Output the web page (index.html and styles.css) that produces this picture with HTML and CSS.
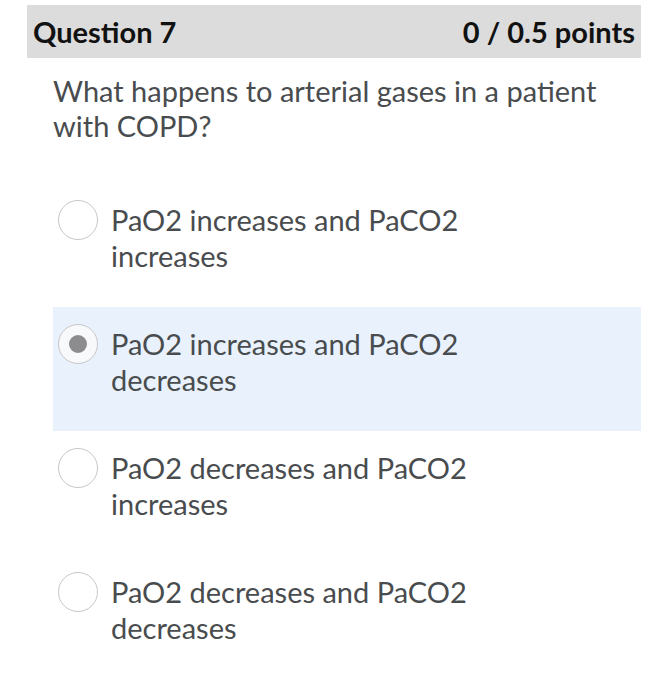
FILE: index.html
```html
<!DOCTYPE html>
<html>
<head>
<meta charset="utf-8">
<link rel="stylesheet" href="styles.css">
</head>
<body>
<div class="quiz">
  <div class="q-header">
    <span class="q-title">Question 7</span>
    <span class="q-points">0 / 0.5 points</span>
  </div>
  <div class="q-body">
    <p class="q-text">What happens to arterial gases in a patient with COPD?</p>
    <ul class="options">
      <li class="option">
        <span class="radio"></span>
        <span class="opt-text">PaO2 increases and PaCO2<br>increases</span>
      </li>
      <li class="option selected">
        <span class="radio checked"></span>
        <span class="opt-text">PaO2 increases and PaCO2<br>decreases</span>
      </li>
      <li class="option">
        <span class="radio"></span>
        <span class="opt-text">PaO2 decreases and PaCO2<br>increases</span>
      </li>
      <li class="option">
        <span class="radio"></span>
        <span class="opt-text">PaO2 decreases and PaCO2<br>decreases</span>
      </li>
    </ul>
  </div>
</div>
</body>
</html>
```

FILE: styles.css
```css
html, body {
  margin: 0;
  padding: 0;
  background: #ffffff;
}
body {
  font-family: Lato, "Open Sans", sans-serif;
  padding-top: 5px;
}
.quiz {
  margin-left: 27px;
  width: 614px;
}
.q-header {
  display: flex;
  justify-content: space-between;
  align-items: center;
  height: 53px;
  padding: 0 6px;
  background: #dcdcdc;
  font-weight: bold;
  font-size: 29px;
  color: #111111;
}
.q-body {
  padding-left: 26px;
}
.q-text {
  margin: 15px 0 0 0;
  font-size: 29px;
  line-height: 35px;
  color: #494c4e;
  width: 570px;
}
.options {
  list-style: none;
  margin: 40px 0 0 0;
  padding: 0;
}
.option {
  display: flex;
  align-items: flex-start;
  gap: 13px;
  padding: 17px 0 35px 5px;
  height: 72px;
}
.option.selected {
  background: #e8f1fc;
}
.radio {
  flex: none;
  width: 38px;
  height: 38px;
  border: 1.5px solid #c7c7c7;
  border-radius: 50%;
  background: #ffffff;
  display: flex;
  align-items: center;
  justify-content: center;
}
.radio.checked {
  background: #f7f9fb;
}
.radio.checked::after {
  content: "";
  width: 18px;
  height: 18px;
  border-radius: 50%;
  background: #8c8c8e;
}
.opt-text {
  margin-top: 2px;
  font-size: 29px;
  line-height: 36px;
  color: #494c4e;
}
```
